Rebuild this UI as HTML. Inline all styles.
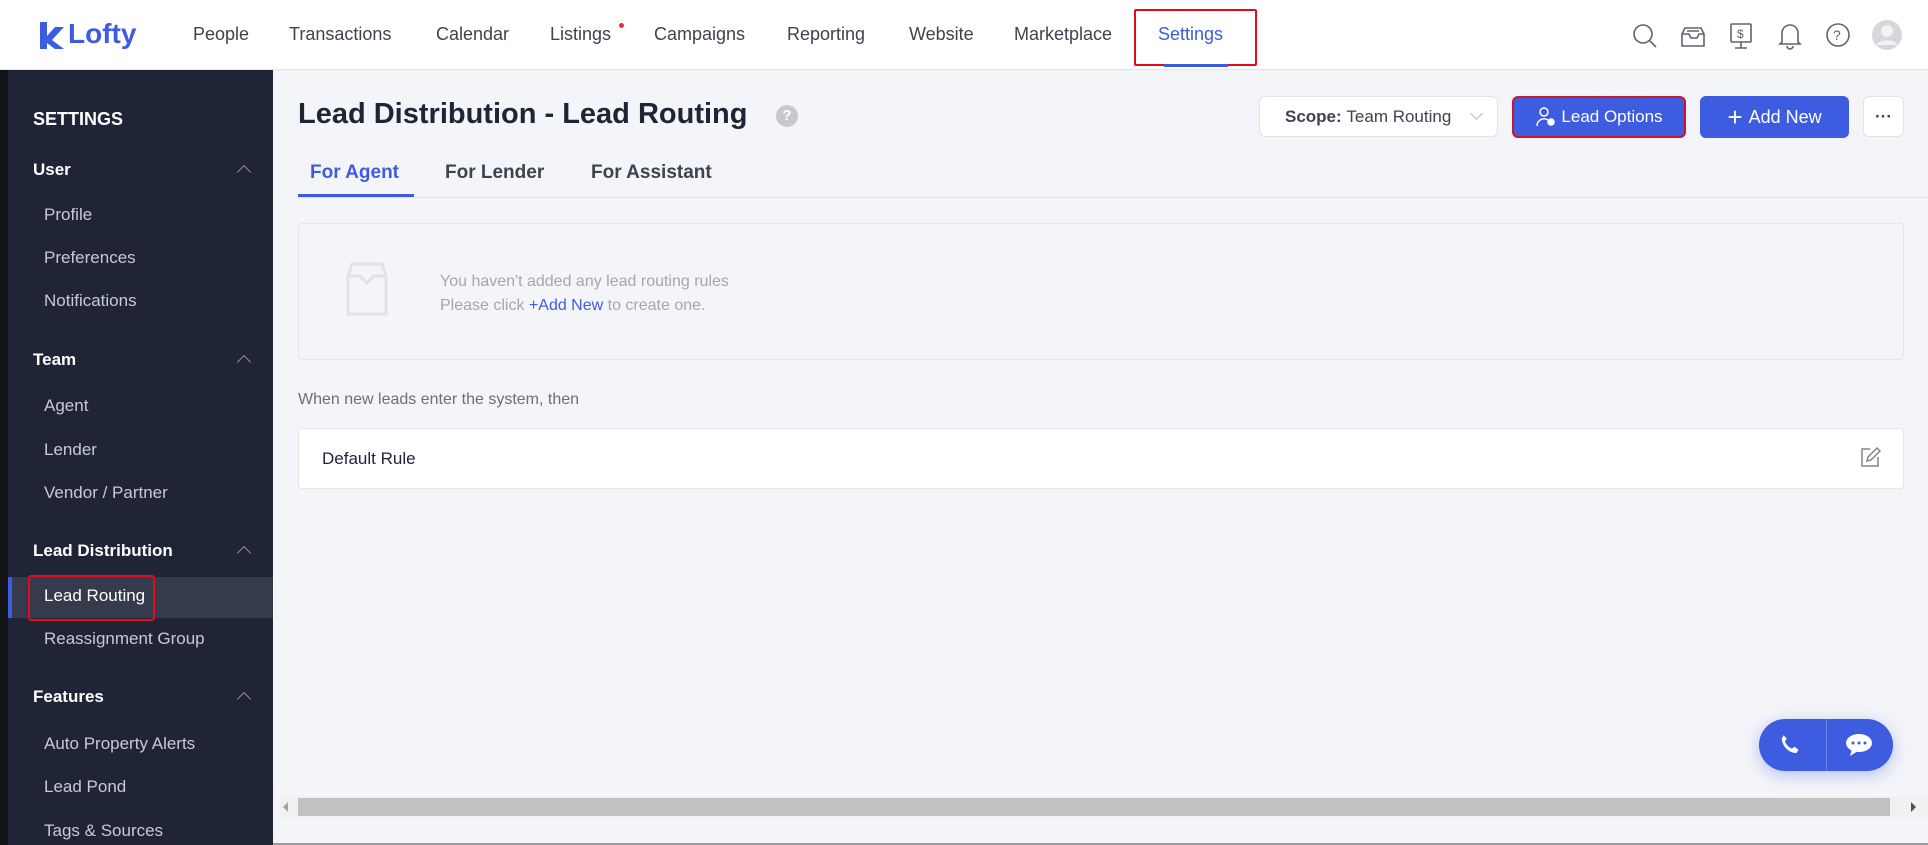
<!DOCTYPE html>
<html><head><meta charset="utf-8"><style>
*{box-sizing:border-box;margin:0;padding:0}
body{width:1928px;height:845px;overflow:hidden;font-family:"Liberation Sans",sans-serif;background:#f4f5f9;position:relative}
.abs{position:absolute}
.top{left:0;top:0;width:1928px;height:70px;background:#fff;border-bottom:1px solid #e1e3ea}
.nav{top:24px;font-size:18px;color:#3f4350}
.side{left:0;top:70px;width:273px;height:775px;background:#202437}
.side .strip{left:0;top:0;width:8px;height:775px;background:#121317}
.sh{left:33px;font-size:17px;font-weight:bold;color:#fff}
.si{left:44px;font-size:17px;color:#c8cad3}
.chev{left:239px;width:10px;height:10px;border-left:1.5px solid #8a8e9c;border-top:1.5px solid #8a8e9c;transform:rotate(45deg)}
.btn{border-radius:6px;font-size:17px;display:flex;align-items:center;justify-content:center}
</style></head><body>
<div class="abs top"></div>
<svg class="abs" style="left:38px;top:20px" width="28" height="30" viewBox="0 0 28 30"><path d="M2 2h7v14l8-9h9L14 20l12 9h-9l-8-6v6H2z" fill="#3d5ce0"/></svg>
<div class="abs" style="left:68px;top:18px;font-size:28px;font-weight:bold;color:#3d5ce0">Lofty</div>
<div class="abs nav" style="left:193px">People</div>
<div class="abs nav" style="left:289px">Transactions</div>
<div class="abs nav" style="left:436px">Calendar</div>
<div class="abs nav" style="left:550px">Listings</div>
<div class="abs" style="left:619px;top:23px;width:5px;height:5px;border-radius:50%;background:#e5303a"></div>
<div class="abs nav" style="left:654px">Campaigns</div>
<div class="abs nav" style="left:787px">Reporting</div>
<div class="abs nav" style="left:909px">Website</div>
<div class="abs nav" style="left:1014px">Marketplace</div>
<div class="abs nav" style="left:1158px;color:#3d5ce0">Settings</div>
<div class="abs" style="left:1134px;top:9px;width:123px;height:57px;border:2px solid #e00c1b;border-radius:2px"></div>
<div class="abs" style="left:1164px;top:64px;width:64px;height:3px;background:#3d5ce0"></div>
<svg class="abs" style="left:1630px;top:20px" width="280" height="32" viewBox="0 0 280 32" fill="none" stroke="#60636e" stroke-width="1.6">
<circle cx="13" cy="14" r="9"/><path d="M20 21l6 6"/>
<path d="M55 8h16l3 6v12H52V14zM52 14h7l2 4h6l2-4h5M57 11h12"/>
<rect x="101" y="4" width="20" height="18" rx="1"/><path d="M111 22v6M105 28h12"/><text x="107" y="18" font-size="12" fill="#60636e" stroke="none" font-family="Liberation Sans">$</text>
<path d="M152 22V13a8 8 0 0116 0v9l2 2h-20zM157 26a3 3 0 006 0"/>
<circle cx="208" cy="15" r="11"/><text x="203" y="20" font-size="14" fill="#60636e" stroke="none" font-family="Liberation Sans">?</text>
<circle cx="257" cy="15" r="15" fill="#d5d7dd" stroke="none"/><circle cx="257" cy="11" r="6" fill="#f2f3f5" stroke="none"/><path d="M246 25a12 8 0 0122 0" fill="#f2f3f5" stroke="none"/>
</svg>

<div class="abs side"><div class="abs strip"></div></div>
<div class="abs" style="left:8px;top:577px;width:265px;height:41px;background:#353a4c"></div>
<div class="abs" style="left:8px;top:577px;width:4px;height:41px;background:#3d5ce0"></div>
<div class="abs sh" style="top:109px;font-size:18px">SETTINGS</div>
<div class="abs sh" style="top:160px">User</div><div class="abs chev" style="top:167px"></div>
<div class="abs si" style="top:205px">Profile</div>
<div class="abs si" style="top:248px">Preferences</div>
<div class="abs si" style="top:291px">Notifications</div>
<div class="abs sh" style="top:350px">Team</div><div class="abs chev" style="top:357px"></div>
<div class="abs si" style="top:396px">Agent</div>
<div class="abs si" style="top:440px">Lender</div>
<div class="abs si" style="top:483px">Vendor / Partner</div>
<div class="abs sh" style="top:541px">Lead Distribution</div><div class="abs chev" style="top:548px"></div>
<div class="abs si" style="top:586px;color:#fff">Lead Routing</div>
<div class="abs" style="left:28px;top:575px;width:127px;height:46px;border:2px solid #e00c1b;border-radius:3px"></div>
<div class="abs si" style="top:629px">Reassignment Group</div>
<div class="abs sh" style="top:687px">Features</div><div class="abs chev" style="top:694px"></div>
<div class="abs si" style="top:734px">Auto Property Alerts</div>
<div class="abs si" style="top:777px">Lead Pond</div>
<div class="abs si" style="top:821px">Tags &amp; Sources</div>

<div class="abs" style="left:298px;top:98px;font-size:29px;font-weight:bold;color:#202437">Lead Distribution - Lead Routing</div>
<div class="abs" style="left:776px;top:105px;width:22px;height:22px;border-radius:50%;background:#c6c8ce;color:#fff;font-size:15px;font-weight:bold;text-align:center;line-height:22px">?</div>
<div class="abs" style="left:310px;top:162px;font-size:19px;font-weight:bold;color:#3d5ce0">For Agent</div>
<div class="abs" style="left:445px;top:162px;font-size:19px;font-weight:bold;color:#3f4350">For Lender</div>
<div class="abs" style="left:591px;top:162px;font-size:19px;font-weight:bold;color:#3f4350">For Assistant</div>
<div class="abs" style="left:298px;top:197px;width:1630px;height:1px;background:#e1e3ea"></div>
<div class="abs" style="left:298px;top:194px;width:116px;height:3px;background:#3d5ce0"></div>

<div class="abs btn" style="left:1259px;top:96px;width:239px;height:41px;background:#fff;border:1px solid #e1e3ea;color:#3f4350;justify-content:flex-start;padding-left:25px"><b>Scope:</b>&nbsp;Team Routing<span style="position:absolute;right:16px;top:12px;width:9px;height:9px;border-right:1px solid #b5b8c0;border-bottom:1px solid #b5b8c0;transform:rotate(45deg)"></span></div>
<div class="abs btn" style="left:1512px;top:96px;width:174px;height:42px;background:#3d5ce0;color:#fff;border:2px solid #d0152a">
<svg width="22" height="22" viewBox="0 0 22 22" fill="none" stroke="#fff" stroke-width="1.5" style="margin-right:4px"><circle cx="9" cy="6" r="4"/><path d="M2 20a7 7 0 0112-5"/><circle cx="16" cy="16" r="3" fill="#fff"/></svg>Lead Options</div>
<div class="abs btn" style="left:1700px;top:96px;width:149px;height:42px;background:#3d5ce0;color:#fff;font-size:18px"><span style="font-size:26px;margin-right:6px;line-height:1">+</span>Add New</div>
<div class="abs btn" style="left:1863px;top:96px;width:41px;height:41px;background:#fff;border:1px solid #e1e3ea;color:#3f4350;font-weight:bold">···</div>

<div class="abs" style="left:298px;top:223px;width:1606px;height:137px;border:1px solid #e4e6ec;border-radius:4px"></div>
<svg class="abs" style="left:346px;top:262px" width="42" height="54" viewBox="0 0 42 54" fill="none" stroke="#e1e2e6" stroke-width="3"><path d="M6 2h30l4 12v38H2V14zM2 14h12l7 7 7-7h12"/></svg>
<div class="abs" style="left:440px;top:270px;font-size:16px;color:#a4a7b0;line-height:24px">You haven't added any lead routing rules<br>Please click <span style="color:#3d5ce0">+Add New</span> to create one.</div>
<div class="abs" style="left:298px;top:391px;font-size:16px;color:#6b6f7a">When new leads enter the system, then</div>
<div class="abs" style="left:298px;top:428px;width:1606px;height:61px;background:#fff;border:1px solid #e4e6ec;border-radius:4px"></div>
<div class="abs" style="left:322px;top:449px;font-size:17px;color:#202437">Default Rule</div>
<svg class="abs" style="left:1859px;top:446px" width="22" height="22" viewBox="0 0 22 22" fill="none" stroke="#80838c" stroke-width="1.5"><path d="M11 3H3v17h16v-9"/><path d="M8 15l1-4 9-9 3 3-9 9z"/></svg>

<div class="abs" style="left:1759px;top:719px;width:134px;height:52px;border-radius:26px;background:#3d5ce0;box-shadow:0 4px 16px rgba(61,92,224,.35)"></div>
<div class="abs" style="left:1826px;top:719px;width:1px;height:52px;background:#6a83ea"></div>
<svg class="abs" style="left:1776px;top:731px" width="28" height="28" viewBox="0 0 24 24"><path d="M6.6 3.5l2.6 3.2-1.6 2.4a12 12 0 006 6l2.4-1.6 3.2 2.6-1.6 2.8c-6.5 0-12.6-6-12.6-12.6z" fill="#fff"/></svg>
<svg class="abs" style="left:1844px;top:731px" width="30" height="28" viewBox="0 0 30 28"><ellipse cx="15" cy="12" rx="13" ry="9" fill="#fff"/><path d="M8 18l-2 7 8-5z" fill="#fff"/><circle cx="9" cy="12" r="1.5" fill="#3d5ce0"/><circle cx="15" cy="12" r="1.5" fill="#3d5ce0"/><circle cx="21" cy="12" r="1.5" fill="#3d5ce0"/></svg>

<div class="abs" style="left:280px;top:796px;width:1648px;height:22px;background:#f1f1f1"></div>
<div class="abs" style="left:298px;top:798px;width:1592px;height:18px;background:#c1c1c1"></div>
<div class="abs" style="left:283px;top:802px;width:0;height:0;border-top:5px solid transparent;border-bottom:5px solid transparent;border-right:5px solid #a3a3a3"></div>
<div class="abs" style="left:1911px;top:802px;width:0;height:0;border-top:5px solid transparent;border-bottom:5px solid transparent;border-left:5px solid #505050"></div>
<div class="abs" style="left:273px;top:843px;width:1655px;height:2px;background:#9a9a9a"></div>
</body></html>
